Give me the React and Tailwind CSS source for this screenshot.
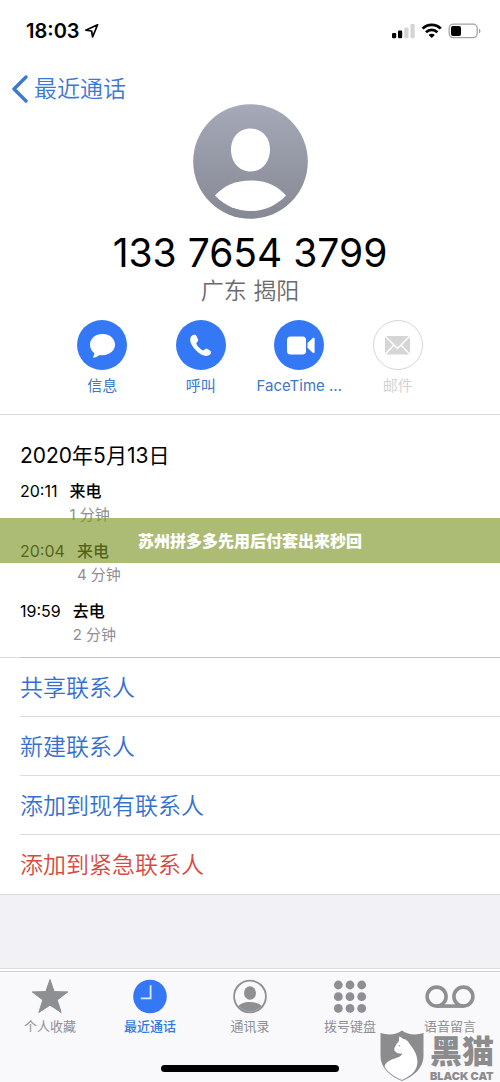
import React from 'react';

const LocationArrow = () => (
  <svg className="h-4 w-4" viewBox="0 0 16 16" fill="none" stroke="black" strokeWidth="1.7" strokeLinejoin="round">
    <path d="M13.6 1.8 L1.8 7.2 L7.6 8 L8.6 14 Z" />
  </svg>
);

const StatusIcons = () => (
  <svg className="h-4 w-[90px]" viewBox="0 0 90 16">
    <rect x="0" y="10" width="4.2" height="5.3" rx="1.2" />
    <rect x="6" y="7.5" width="4.2" height="7.8" rx="1.2" />
    <rect x="12.3" y="4.5" width="4.2" height="10.8" rx="1.2" fill="#d4d4d4" />
    <rect x="18.5" y="1" width="4.2" height="14.3" rx="1.2" fill="#d4d4d4" />
    <g fill="none" stroke="black" strokeWidth="2.7">
      <path d="M30.6 5.6 C35.6 0.6 43.8 0.6 48.8 5.6" />
      <path d="M34 9.2 C37.2 6.2 42.2 6.2 45.4 9.2" />
    </g>
    <path d="M39.7 15 L36.6 11.9 C38.2 10.5 41.2 10.5 42.8 11.9 Z" />
    <rect x="57.2" y="1.2" width="28" height="13.4" rx="4" fill="none" stroke="#a3a3a3" strokeWidth="1.3" />
    <rect x="59" y="3" width="10" height="10" rx="2" />
    <path d="M87 5.5 C89 6.5 89 9.5 87 10.5 Z" fill="#a3a3a3" />
  </svg>
);

const Avatar = () => (
  <svg className="h-[115px] w-[115px]" viewBox="0 0 115 115">
    <defs>
      <linearGradient id="avatar" x1="0" y1="0" x2="0" y2="1">
        <stop offset="0" stopColor="#a5a9b8" />
        <stop offset="1" stopColor="#868993" />
      </linearGradient>
    </defs>
    <circle cx="57.5" cy="57.5" r="57.3" fill="url(#avatar)" />
    <path d="M57.5 24.5 C69 24.5 77 33.5 77 45.5 C77 58 69 67.5 57.5 67.5 C46 67.5 38 58 38 45.5 C38 33.5 46 24.5 57.5 24.5 Z" fill="white" />
    <path d="M22 91.5 C31 81.5 43 76.5 57.5 76.5 C72 76.5 84 81.5 93 91.5 C83 102 71 107 57.5 107 C44 107 32 102 22 91.5 Z" fill="white" />
  </svg>
);

const MessageIcon = () => (
  <svg className="h-[49px] w-[49px]" viewBox="0 0 49 49" fill="white">
    <path d="M24.5 13 C31.8 13 37 17.7 37 23.6 C37 29.5 31.8 34.2 24.5 34.2 C23.4 34.2 22.4 34.1 21.5 33.9 C19.8 35.4 17.5 36.4 15.4 36.6 C14.8 36.6 14.8 36.2 15.2 35.7 C16 34.7 16.4 33.6 16.4 32.3 C13.7 30.4 12 27.3 12 23.6 C12 17.7 17.2 13 24.5 13 Z" />
  </svg>
);

const PhoneIcon = () => (
  <svg className="h-[49px] w-[49px]" viewBox="0 0 49 49" fill="white">
    <path d="M16.2 14.6 C17.6 13.4 19.6 13.6 20.6 15.2 L21.9 18 C22.4 19.3 22 20.4 21 21.2 C20.3 21.9 20.2 22.6 20.7 23.6 C22 25.9 23.7 27.7 26 29.1 C27 29.7 27.7 29.5 28.4 28.7 C29.3 27.7 30.4 27.5 31.7 28.1 L33.9 29.4 C35.3 30.4 35.4 32.1 34.2 33.3 C31.9 35.5 28.6 35.4 25.2 33.5 C21.2 31.2 17.7 27.6 15.6 23.6 C13.7 20 13.6 16.8 16.2 14.6 Z" />
  </svg>
);

const VideoIcon = () => (
  <svg className="h-[49px] w-[49px]" viewBox="0 0 49 49" fill="white">
    <rect x="12" y="15.5" width="19" height="18" rx="3.5" />
    <path d="M32.5 22.1 L37.8 17.1 C38.8 16.3 39.6 16.7 39.6 17.7 L39.6 31.1 C39.6 32.1 38.8 32.5 37.8 31.7 L32.5 26.8 Z" />
  </svg>
);

const MailIcon = () => (
  <svg className="h-[47px] w-[47px]" viewBox="0 0 47 47">
    <rect x="11" y="14" width="25" height="18.5" fill="#d6d6d6" />
    <path d="M11 14 L23.5 26.5 L36 14 M11 32.5 L20 23 M36 32.5 L27 23" fill="none" stroke="white" strokeWidth="1.5" />
  </svg>
);

const StarIcon = () => (
  <svg className="h-9 w-10" viewBox="0 0 40 36" fill="#8e8f93" stroke="#8e8f93" strokeWidth="1" strokeLinejoin="round">
    <path d="M20 0.5 L24.2 12.6 L37.8 12.9 L27.2 21 L31.2 33.5 L20 26.2 L8.8 33.5 L12.8 21 L2.2 12.9 L15.8 12.6 Z" />
  </svg>
);

const ClockIcon = () => (
  <svg className="h-9 w-10" viewBox="0 0 40 36">
    <circle cx="20" cy="17.5" r="16.8" fill="#3478f6" />
    <path d="M20.6 6.2 V19.3 H10.8" fill="none" stroke="#dbe7ff" strokeWidth="1.8" />
  </svg>
);

const ContactIcon = () => (
  <svg className="h-9 w-10" viewBox="0 0 40 36">
    <defs>
      <clipPath id="contact">
        <circle cx="20" cy="17.5" r="15" />
      </clipPath>
    </defs>
    <circle cx="20" cy="17.5" r="15.9" fill="none" stroke="#8e8f93" strokeWidth="1.8" />
    <g fill="#8e8f93" clipPath="url(#contact)">
      <ellipse cx="20" cy="14" rx="6" ry="6.8" />
      <path d="M7 28.5 C10 24.5 14 23 20 23 C26 23 30 24.5 33 28.5 L28 36 L12 36 Z" />
    </g>
  </svg>
);

const KeypadIcon = () => (
  <svg className="h-9 w-10" viewBox="0 0 40 36" fill="#8e8f93">
    {[8.3, 20, 31.7].map((x) => [6, 17.7, 29.4].map((y) => <circle key={`${x}-${y}`} cx={x} cy={y} r="4.4" />))}
  </svg>
);

const VoicemailIcon = () => (
  <svg className="h-9 w-[52px]" viewBox="0 0 52 36" fill="none" stroke="#8e8f93" strokeWidth="3.6">
    <circle cx="12.6" cy="17.6" r="9.5" />
    <circle cx="39.4" cy="17.6" r="9.5" />
    <path d="M12.6 27.1 H39.4" />
  </svg>
);

const CatShield = () => (
  <svg className="h-[52px] w-[44px]" viewBox="0 0 44 52">
    <path d="M0.5 3 C8 5.5 16 5 22 0.5 C28 5 36 5.5 43.5 3 V26 C43.5 38 34 46 22 51 C10 46 0.5 38 0.5 26 Z" fill="#8c8c8e" />
    <path d="M19.2 6.6 C20.8 7 22.2 8 23.2 9 C25.6 9 28 10.6 29.2 13.4 C33.5 18.5 37.2 24.5 37.4 31 C37.6 37.5 34.5 42.8 29 46 C26.8 47.6 24.3 49 22 50 C14 46.8 7.2 42 4.5 36.5 C5.8 32.3 9.5 30.3 14 28.8 C19 27.2 21.8 26 22.4 23.6 C19.4 24 16 23 14.6 20.8 C13.7 19.3 14.6 17.6 16 15 C17 13.2 18.2 12.3 18.8 11.3 Z" fill="white" />
    <path d="M18.2 15.8 L20.4 14.9 L19.6 16.6 Z" fill="#8c8c8e" />
  </svg>
);

const actions = [
  { label: '信息', Icon: MessageIcon },
  { label: '呼叫', Icon: PhoneIcon },
  { label: 'FaceTime …', Icon: VideoIcon },
  { label: '邮件', Icon: MailIcon, disabled: true },
];

const calls = [
  { time: '20:11', type: '来电', duration: '1 分钟' },
  { time: '20:04', type: '来电', duration: '4 分钟' },
  { time: '19:59', type: '去电', duration: '2 分钟' },
];

const options = [
  { label: '共享联系人' },
  { label: '新建联系人' },
  { label: '添加到现有联系人' },
  { label: '添加到紧急联系人', danger: true },
];

const tabs = [
  { label: '个人收藏', Icon: StarIcon },
  { label: '最近通话', Icon: ClockIcon, active: true },
  { label: '通讯录', Icon: ContactIcon },
  { label: '拨号键盘', Icon: KeypadIcon },
  { label: '语音留言', Icon: VoicemailIcon },
];

const App = () => {
  return (
    <div className="relative flex min-h-screen flex-col bg-white font-['Inter','Noto_Sans_CJK_SC',sans-serif] text-black">
      {/* Status bar */}
      <div className="flex h-[62px] items-center justify-between pr-[18px] pl-[26px]">
        <div className="flex items-center gap-1">
          <span className="text-xl font-semibold">18:03</span>
          <LocationArrow />
        </div>
        <StatusIcons />
      </div>

      {/* Contact header */}
      <header className="flex flex-col border-b border-[#dcdcde] pb-[18px]">
        <button className="flex h-[42px] items-center gap-[6px] self-start pt-3 pl-3 text-[23px] font-[350] text-[#3b78d8]">
          <svg className="h-7 w-4" viewBox="0 0 16 28" fill="none" stroke="#3b78d8" strokeWidth="3.4" strokeLinecap="round" strokeLinejoin="round">
            <path d="M14 2 L2 14 L14 26" />
          </svg>
          最近通话
        </button>
        <div className="flex flex-col items-center">
          <Avatar />
          <h1 className="mt-3 text-[39px] leading-[44px]">133 7654 3799</h1>
          <p className="text-[23px] leading-8 font-[350] text-[#6a6a6d]">广东 揭阳</p>
        </div>
        <div className="mt-[13px] grid grid-cols-4 px-[53px]">
          {actions.map(({ label, Icon, disabled }) => (
            <button
              key={label}
              disabled={disabled}
              className={`flex flex-col items-center gap-[6px] text-[15px] leading-5 whitespace-nowrap ${disabled ? 'text-[#d3d3d5]' : 'text-[#3b78c8]'}`}
            >
              <span className={`flex h-[50px] w-[50px] items-center justify-center rounded-full ${disabled ? 'border border-[#d6d6d6]' : 'bg-[#3478f6]'}`}>
                <Icon />
              </span>
              {label}
            </button>
          ))}
        </div>
      </header>

      {/* Call history */}
      <section className="relative pt-[27px] pb-[10px] pl-5">
        <h2 className="text-[21px] leading-7">2020年5月13日</h2>
        <ul className="flex flex-col gap-3 pt-[9px]">
          {calls.map((call) => (
            <li key={call.time} className="flex gap-3 text-base leading-6">
              <span>{call.time}</span>
              <div>
                <p className="font-medium">{call.type}</p>
                <p className="text-[15px] leading-6 text-[#8e8e92]">{call.duration}</p>
              </div>
            </li>
          ))}
        </ul>
        <div className="absolute inset-x-0 top-[103px] flex h-[45px] items-center justify-center bg-[#81982b]/65 text-base font-black text-white">
          苏州拼多多先用后付套出来秒回
        </div>
      </section>

      {/* Contact options */}
      <section className="border-y border-[#dcdcde] pl-5">
        <div className="-mt-px border-t border-[#c4c4c6]">
          {options.map(({ label, danger }) => (
            <button
              key={label}
              className={`block h-[59px] w-full border-b border-[#dcdcde] pt-[2px] text-left text-[23px] font-[350] last:border-b-0 ${danger ? 'text-[#d64a3f]' : 'text-[#3570d0]'}`}
            >
              {label}
            </button>
          ))}
        </div>
      </section>

      <div className="min-h-[74px] flex-1 border-b border-[#dcdcde] bg-[#f1f1f6]" />

      {/* Tab bar */}
      <nav className="mt-[2px] border-t border-[#d0d0d2] bg-[#f9f9fb] pt-[7px] pb-[10px]">
        <div className="grid grid-cols-5">
          {tabs.map(({ label, Icon, active }) => (
            <button
              key={label}
              className={`flex flex-col items-center gap-[3px] text-[13px] leading-4 ${active ? 'font-medium text-[#3478e0]' : 'text-[#8e8f93]'}`}
            >
              <Icon />
              {label}
            </button>
          ))}
        </div>
        <div className="mx-auto mt-[31px] h-[7px] w-[178px] rounded-full bg-black" />
      </nav>

      {/* Watermark */}
      <div className="absolute right-0 bottom-0 flex items-end gap-[6px] text-[#8c8c8e]">
        <CatShield />
        <div className="w-[70px]">
          <p className="text-[32px] leading-8 font-black">黑猫</p>
          <p className="mt-[2px] text-[11px] leading-3 font-black whitespace-nowrap">BLACK CAT</p>
        </div>
      </div>
    </div>
  );
};

export default App;
